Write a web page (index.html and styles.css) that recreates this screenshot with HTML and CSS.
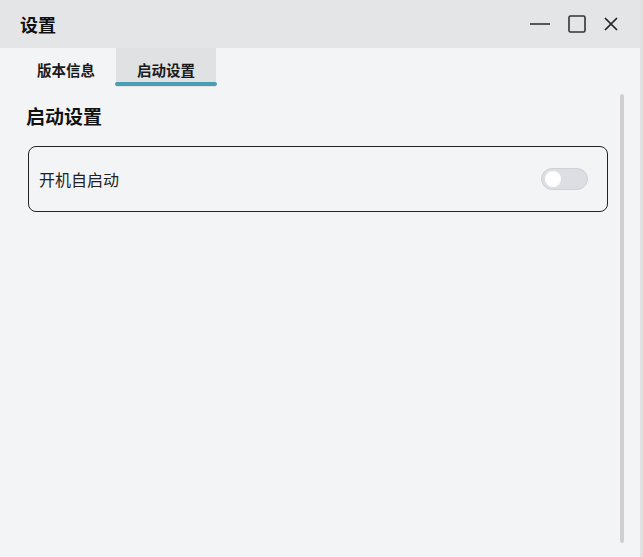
FILE: index.html
```html
<!DOCTYPE html>
<html lang="zh">
<head>
<meta charset="utf-8">
<link rel="stylesheet" href="styles.css">
</head>
<body>
<div class="window">
  <div class="titlebar">
    <div class="title">设置</div>
    <div class="controls">
      <span class="ctl">
        <svg width="20" height="20" viewBox="0 0 20 20"><line x1="0" y1="10" x2="20" y2="10" stroke="#333" stroke-width="1.6"/></svg>
      </span>
      <span class="ctl">
        <svg width="18" height="18" viewBox="0 0 18 18"><rect x="1" y="1" width="16" height="16" rx="1.5" fill="none" stroke="#333" stroke-width="1.6"/></svg>
      </span>
      <span class="ctl">
        <svg width="14" height="14" viewBox="0 0 14 14"><path d="M1 1L13 13M13 1L1 13" stroke="#222" stroke-width="1.7" fill="none"/></svg>
      </span>
    </div>
  </div>
  <div class="tabs">
    <div class="tab">版本信息</div>
    <div class="tab active">启动设置</div>
  </div>
  <div class="main">
    <div class="content">
      <h2 class="heading">启动设置</h2>
      <div class="card">
        <span class="label">开机自启动</span>
        <span class="toggle"><span class="knob"></span></span>
      </div>
    </div>
    <div class="scrollbar"></div>
  </div>
</div>
</body>
</html>
```
FILE: styles.css
```css
html, body {
  margin: 0;
  padding: 0;
}
body {
  width: 643px;
  height: 557px;
  overflow: hidden;
  background: #f3f4f6;
  font-family: "Noto Sans CJK SC", "Noto Sans", sans-serif;
  color: #111;
}
.window {
  width: 640px;
  height: 557px;
  border-right: 3px solid #e1e1e3;
  display: flex;
  flex-direction: column;
}
.titlebar {
  height: 48px;
  background: #e4e5e7;
  display: flex;
  align-items: center;
  justify-content: space-between;
  padding-left: 20px;
  padding-right: 22px;
}
.title {
  font-size: 18px;
  font-weight: 700;
  line-height: 1;
  margin-top: -1px;
}
.controls {
  display: flex;
  align-items: center;
  gap: 18px;
}
.ctl {
  display: flex;
  align-items: center;
  justify-content: center;
}
.ctl svg { display: block; }
.tabs {
  display: flex;
  padding-left: 16px;
  height: 39px;
}
.tab {
  width: 100px;
  font-size: 14.5px;
  font-weight: 600;
  text-align: center;
  line-height: 1;
  padding-top: 15px;
  box-sizing: border-box;
  color: #1a1a1a;
}
.tab.active {
  background: #e0e1e3;
  position: relative;
}
.tab.active::after {
  content: "";
  position: absolute;
  left: -1px;
  right: -1px;
  bottom: 1px;
  height: 4px;
  border-radius: 2px;
  background: #4a9db3;
}
.main {
  flex: 1;
  display: flex;
}
.content {
  width: 582px;
  padding-left: 26px;
}
.heading {
  margin: 17px 0 0;
  font-size: 19px;
  font-weight: 700;
  line-height: 24px;
}
.card {
  margin: 18px 0 0 2px;
  height: 66px;
  box-sizing: border-box;
  border: 1px solid #222;
  border-radius: 8px;
  display: flex;
  align-items: center;
  justify-content: space-between;
  padding: 0 19px 0 10px;
}
.label {
  font-size: 16px;
  color: #222;
}
.toggle {
  width: 47px;
  height: 22px;
  box-sizing: border-box;
  border-radius: 11px;
  background: #dcdee3;
  border: 1px solid #cfd1d6;
  display: flex;
  align-items: center;
  padding-left: 3px;
}
.knob {
  width: 16px;
  height: 16px;
  border-radius: 50%;
  background: #fff;
}
.scrollbar {
  width: 4px;
  height: 449px;
  margin: 7px 0 0 12px;
  background: #cfcfd1;
  border-radius: 2px;
}
```
